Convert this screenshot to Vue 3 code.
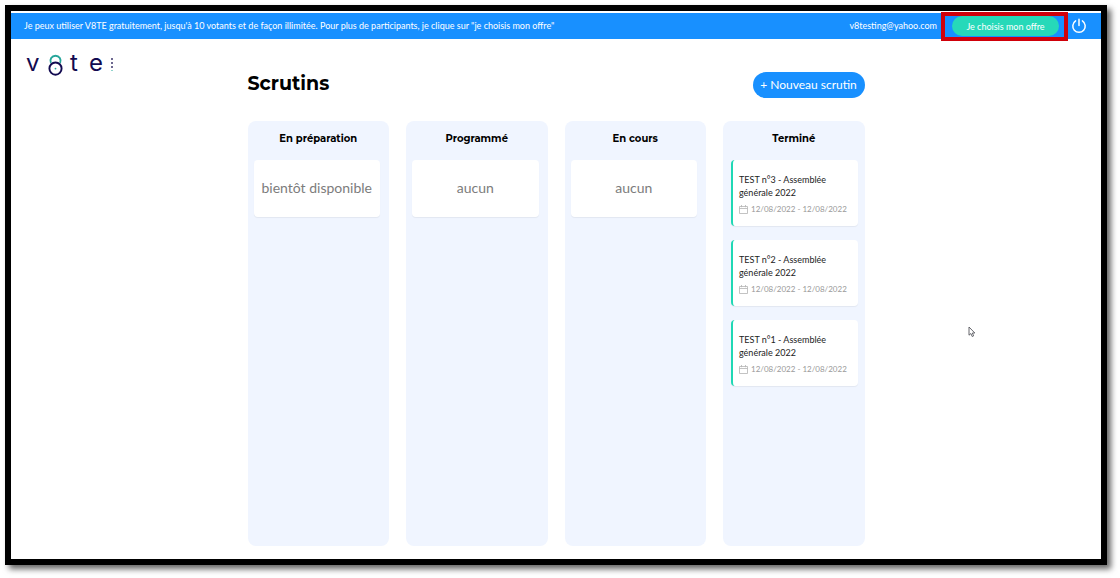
<script setup>
const columns = [
  { title: 'En préparation', empty: 'bientôt disponible', polls: [] },
  { title: 'Programmé', empty: 'aucun', polls: [] },
  { title: 'En cours', empty: 'aucun', polls: [] },
  {
    title: 'Terminé',
    polls: [
      { name: 'TEST n°3 - Assemblée générale 2022', dates: '12/08/2022 - 12/08/2022' },
      { name: 'TEST n°2 - Assemblée générale 2022', dates: '12/08/2022 - 12/08/2022' },
      { name: 'TEST n°1 - Assemblée générale 2022', dates: '12/08/2022 - 12/08/2022' },
    ],
  },
]
</script>

<template>
  <div class="page">
    <div class="frame">
      <header class="topbar">
        <p class="notice">Je peux utiliser V8TE gratuitement, jusqu'à 10 votants et de façon illimitée. Pour plus de participants, je clique sur "je choisis mon offre"</p>
        <span class="email">v8testing@yahoo.com</span>
        <div class="highlight">
          <button class="offer" type="button">Je choisis mon offre</button>
        </div>
        <button class="power" type="button" aria-label="Déconnexion">
          <svg width="16" height="16" viewBox="0 0 16 16" fill="none" stroke="#fff" stroke-width="1.5" stroke-linecap="round">
            <path d="M8 1.2V7.6M4.6 2.9A6.2 6.2 0 1 0 11.4 2.9" />
          </svg>
        </button>
      </header>

      <div class="body">
        <a class="logo" href="#" aria-label="V8TE">
          <svg width="92" height="36" viewBox="0 0 92 36">
            <g class="letters">
              <text x="0" y="25">v</text>
              <text x="44" y="25">t</text>
              <text x="63" y="25">e</text>
            </g>
            <path d="M24.9 17A5.1 5.1 0 1 1 34.1 17" fill="none" stroke="#25a59a" stroke-width="1.9" />
            <circle cx="29.5" cy="22.6" r="6.1" fill="none" stroke="#120a50" stroke-width="1.9" />
            <circle cx="29.5" cy="22.6" r="0.9" fill="#25a59a" />
            <g fill="#6d6890">
              <rect x="85" y="12" width="2" height="2" />
              <rect x="85" y="16" width="2" height="2" />
              <rect x="85" y="20" width="2" height="2" />
            </g>
            <rect x="85" y="24" width="2" height="1" fill="#8fd3cc" />
          </svg>
        </a>

        <main class="board">
          <div class="heading">
            <h1>Scrutins</h1>
            <button class="new" type="button">+ Nouveau scrutin</button>
          </div>
          <div class="columns">
            <section v-for="c in columns" :key="c.title" class="column">
              <h2>{{ c.title }}</h2>
              <p v-if="c.empty" class="card empty">{{ c.empty }}</p>
              <article v-for="p in c.polls" :key="p.name" class="card poll">
                <h3>{{ p.name }}</h3>
                <p class="dates">
                  <svg width="9" height="9" viewBox="0 0 9 9" fill="none" stroke="#b4b4b4" stroke-width="0.8">
                    <path d="M.5 1.5H8.5V8.5H.5ZM.5 3.5H8.5M2.5 0V2.2M6.5 0V2.2" />
                  </svg>
                  {{ p.dates }}
                </p>
              </article>
            </section>
          </div>
        </main>

        <svg class="cursor" width="8" height="12" viewBox="0 0 8 12">
          <path d="M1 1V9.2L2.9 7.5L4.2 10.5L5.6 9.9L4.4 7H6.8Z" fill="#fff" stroke="#55565c" stroke-width="0.9" />
        </svg>
      </div>
    </div>
  </div>
</template>

<style>
html,
body {
  background: #fff;
}
</style>

<style scoped>
.page {
  padding: 5px 13px 13px 5px;
}
.frame {
  padding-top: 2px;
  border: 6px solid #000;
  background: #fff;
  box-shadow: 4px 4px 6px rgba(0, 0, 0, 0.6);
  font-family: Lato, "Liberation Sans", sans-serif;
}
h1, h2, h3, p {
  margin: 0;
}
button {
  border: 0;
  padding: 0;
  font-family: inherit;
  color: #fff;
  cursor: pointer;
}
.topbar {
  display: flex;
  align-items: center;
  height: 26px;
  padding: 0 14px 0 13px;
  background: #1890ff;
  color: #fff;
  font-size: 9px;
  line-height: 12px;
}
.notice {
  flex: 1;
  white-space: nowrap;
}
.email {
  margin-right: 15px;
}
.highlight {
  position: relative;
  display: flex;
}
.highlight::after {
  content: "";
  position: absolute;
  inset: -4px -9px -5px -11px;
  border: 4px solid #d0000a;
  pointer-events: none;
}
.offer {
  width: 107px;
  height: 20px;
  border-radius: 10px;
  background: #26d9b9;
  font-size: 9px;
}
.power {
  display: flex;
  margin-left: 12px;
  background: none;
}
.body {
  position: relative;
}
.logo {
  position: absolute;
  left: 15px;
  top: 7px;
  display: flex;
}
.letters {
  font-family: Inter, sans-serif;
  font-size: 24px;
  fill: #120a50;
}
.board {
  max-width: 617px;
  margin: 0 auto;
  padding: 33px 0 13px;
}
.heading {
  display: flex;
  justify-content: space-between;
  align-items: flex-start;
  margin-bottom: 23px;
}
h1 {
  font-family: Montserrat, Inter, sans-serif;
  font-size: 19px;
  line-height: 24px;
  font-weight: 700;
  color: #000;
}
.new {
  width: 112px;
  height: 26px;
  border-radius: 13px;
  background: #1890ff;
  font-size: 12px;
  line-height: 24px;
}
.columns {
  display: grid;
  grid-template-columns: repeat(4, minmax(0, 1fr));
  gap: 17px;
}
.column {
  display: flex;
  flex-direction: column;
  gap: 14px;
  box-sizing: border-box;
  min-height: 425px;
  padding: 10px 0;
  border-radius: 8px;
  background: #f0f5ff;
}
h2 {
  font-family: Montserrat, Inter, sans-serif;
  font-size: 10px;
  line-height: 15px;
  font-weight: 700;
  color: #000;
  text-align: center;
}
.card {
  border-radius: 4px;
  background: #fff;
  box-shadow: 0 1px 1px rgba(0, 0, 0, 0.06);
}
.empty {
  margin: 0 9px 0 6px;
  padding: 17px 0 19px;
  font-size: 14px;
  line-height: 21px;
  color: #7c7c7c;
  text-align: center;
  white-space: nowrap;
}
.poll {
  margin: 0 7px 0 8px;
  padding: 13px 20px 11px 6px;
  border-left: 2px solid #1fd8b4;
}
h3 {
  font-size: 9px;
  line-height: 13px;
  font-weight: 400;
  color: #222;
}
.dates {
  display: flex;
  align-items: center;
  gap: 3px;
  margin: 4px -16px 0 0;
  font-size: 8px;
  line-height: 12px;
  color: #999;
  white-space: nowrap;
}
.dates svg {
  flex: none;
}
.cursor {
  position: absolute;
  left: 957px;
  top: 287px;
}
</style>
